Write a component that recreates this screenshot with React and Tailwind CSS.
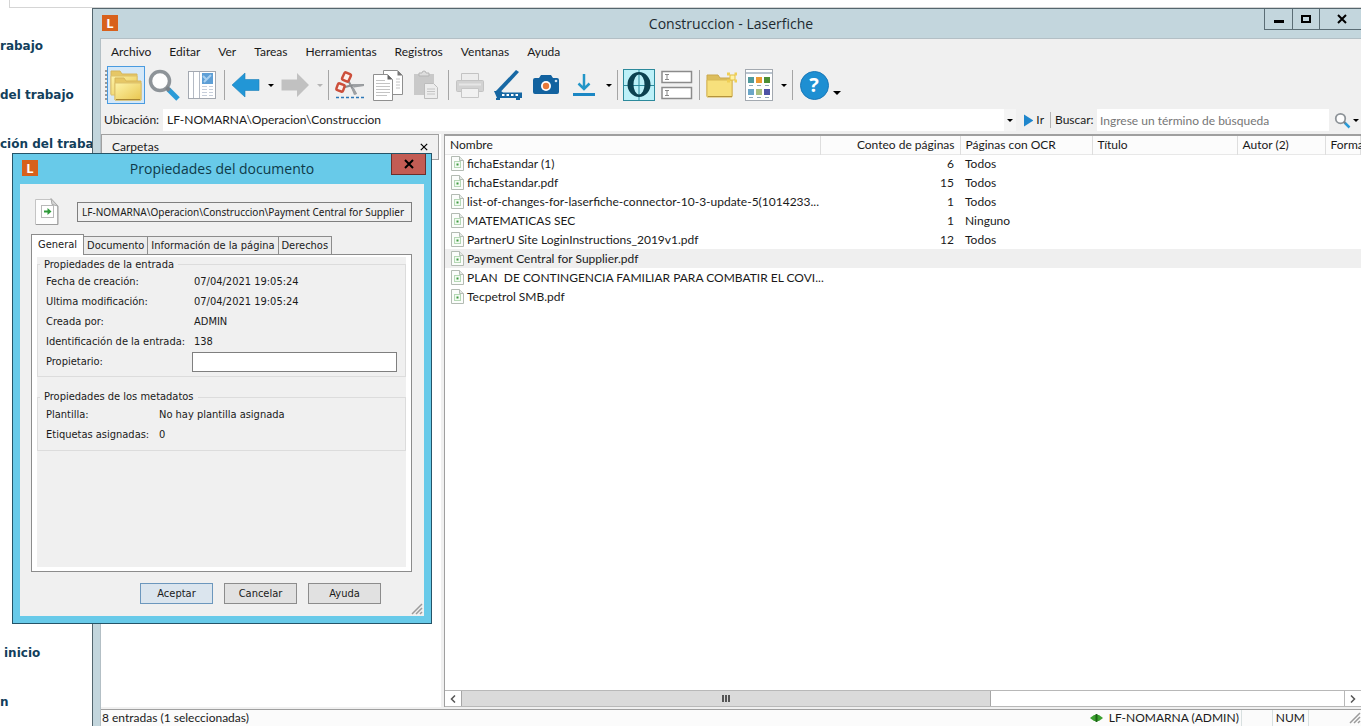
import { useState } from 'react';

const menus = ['Archivo', 'Editar', 'Ver', 'Tareas', 'Herramientas', 'Registros', 'Ventanas', 'Ayuda'];

const entries = [
  { name: 'fichaEstandar (1)', pages: 6, ocr: 'Todos' },
  { name: 'fichaEstandar.pdf', pages: 15, ocr: 'Todos' },
  { name: 'list-of-changes-for-laserfiche-connector-10-3-update-5(1014233...', pages: 1, ocr: 'Todos' },
  { name: 'MATEMATICAS SEC', pages: 1, ocr: 'Ninguno' },
  { name: 'PartnerU Site LoginInstructions_2019v1.pdf', pages: 12, ocr: 'Todos' },
  { name: 'Payment Central for Supplier.pdf', pages: '', ocr: '' },
  { name: 'PLAN  DE CONTINGENCIA FAMILIAR PARA COMBATIR EL COVI...', pages: '', ocr: '' },
  { name: 'Tecpetrol SMB.pdf', pages: '', ocr: '' },
];

const tabs = ['General', 'Documento', 'Información de la página', 'Derechos'];

/* ---------- icons ---------- */

const FoldersIcon = () => (
  <svg width="34" height="34" viewBox="0 0 34 34">
    <defs>
      <linearGradient id="folder" x1="0" y1="0" x2="1" y2="1">
        <stop offset="0" stopColor="#fdf3a8" />
        <stop offset="1" stopColor="#e9c64f" />
      </linearGradient>
    </defs>
    <path d="M2 3h9l2 3h15v20H2z" fill="#e6c765" stroke="#d6b65c" />
    <path d="M2 8h26v19H2z" fill="url(#folder)" stroke="#dcc06c" />
    <path d="M6 10h9l2 3h15v19H6z" fill="#e6c765" stroke="#d6b65c" />
    <path d="M6 15h26v17H6z" fill="url(#folder)" stroke="#dcc06c" />
    <path d="M7 31.500h24" stroke="#a98632" />
  </svg>
);

const SearchIcon = ({ size = 34 }) => (
  <svg width={size} height={size} viewBox="0 0 34 34">
    <circle cx="13" cy="13" r="9.500" fill="#fdfdfd" stroke="#8d9398" strokeWidth="3.500" />
    <path d="M21 21l10 10" stroke="#2a9bd8" strokeWidth="5" />
    <path d="M19.500 19.500l3 3" stroke="#7b8288" strokeWidth="4" />
  </svg>
);

const PanesIcon = () => (
  <svg width="30" height="30" viewBox="0 0 30 30">
    <rect x="1.500" y="1.500" width="27" height="27" fill="#fff" stroke="#a3a8b0" />
    <path d="M6.500 2v26M12.500 2v26" stroke="#b4bac4" />
    <rect x="15" y="3" width="11" height="11" fill="#5e9fd6" />
    <path d="M17 12l7-7M16 6l4 4" stroke="#a9d0ef" strokeWidth="2" />
    <path d="M15 16.500h5M15 19.500h5M15 22.500h5M15 25.500h5M22 16.500h4M22 19.500h4M22 22.500h4M22 25.500h4" stroke="#c6cedb" />
  </svg>
);

const ArrowIcon = ({ forward }) => (
  <svg width="30" height="26" viewBox="0 0 30 26">
    {forward ? (
      <path d="M29 13L17 1v6.500H1.500v11H17V25z" fill="#c1c1c1" />
    ) : (
      <path d="M1 13L14 1v6.500h14v11H14V25z" fill="#2296d6" stroke="#1b7fb8" strokeWidth=".6" />
    )}
  </svg>
);

const CutIcon = () => (
  <svg width="32" height="30" viewBox="0 0 32 30">
    <path d="M14.500 11L17 16L22 24M9 17.500l8-2 13-.5" fill="none" stroke="#8a8d90" strokeWidth="2" />
    <path d="M16 14l14 .5v1.500l-13 2zM16 15l4 10 3-1-5-10z" fill="#9da0a3" />
    <rect x="9" y="3" width="7" height="8" rx="1.500" fill="#fdf0ec" stroke="#cc4f3b" strokeWidth="2.500" transform="rotate(25 12.500 7)" />
    <rect x="3" y="14" width="7" height="7" rx="1.500" fill="#fdf0ec" stroke="#cc4f3b" strokeWidth="2.500" transform="rotate(20 6.500 17.500)" />
    <path d="M2 27.500h28" stroke="#2c78b8" strokeWidth="1.500" strokeDasharray="3 2" />
  </svg>
);

const CopyIcon = () => (
  <svg width="32" height="32" viewBox="0 0 32 32">
    <path d="M11.500 1.500h14l5 5v19h-19z" fill="#fff" stroke="#8f8f8f" />
    <path d="M25.500 1.500v5h5z" fill="#777" />
    <path d="M24 10h4M24 13h4M24 16h4M24 19h4" stroke="#c4c4c4" />
    <path d="M1.500 5.500h14l5 5v21h-19z" fill="#fff" stroke="#8f8f8f" />
    <path d="M15.500 5.500v5h5z" fill="#666" />
    <path d="M4 11.500h9M4 14.500h14M4 17.500h14M4 20.500h14M4 23.500h14M4 26.500h11" stroke="#c4c4c4" />
  </svg>
);

const PasteIcon = () => (
  <svg width="28" height="30" viewBox="0 0 28 30">
    <path d="M2 4h20v21H2z" fill="#c9c9c9" />
    <path d="M7 6V3h3a2 2 0 014 0h3v3z" fill="#dedede" stroke="#b5b5b5" />
    <path d="M12.500 13.500h9l4 4v11h-13z" fill="#ededed" stroke="#bdbdbd" />
    <path d="M15 19h8M15 21.500h8M15 24h8" stroke="#c4c4c4" />
  </svg>
);

const PrintIcon = () => (
  <svg width="30" height="28" viewBox="0 0 30 28">
    <path d="M6.500 2.500h17v8h-17z" fill="#ededed" stroke="#c3c3c3" />
    <rect x="1.500" y="9.500" width="27" height="11" rx="1" fill="#d2d2d2" stroke="#c3c3c3" />
    <path d="M4 13.500h22" stroke="#e6e6e6" strokeWidth="2" />
    <path d="M6.500 17.500h17v9h-17z" fill="#f1f1f1" stroke="#c6c6c6" />
  </svg>
);

const ScanIcon = () => (
  <svg width="32" height="32" viewBox="0 0 32 32">
    <path d="M24 1l3 2L8.500 23H3z" fill="#1768a4" />
    <path d="M2 22h7l2 1.500h19v5.500H5z" fill="#1566a2" />
    <path d="M10 26h2.500M14.500 26H17M19 26h2.500M23.500 26H26" stroke="#fff" strokeWidth="2" />
    <path d="M4 30h4M24 30h4" stroke="#1566a2" strokeWidth="2" />
  </svg>
);

const CameraIcon = () => (
  <svg width="28" height="24" viewBox="0 0 28 24">
    <path d="M9 2h10l2 3h4a2 2 0 012 2v12a2 2 0 01-2 2H3a2 2 0 01-2-2V7a2 2 0 012-2h4z" fill="#12629f" />
    <circle cx="14" cy="13" r="5" fill="#fff" />
    <circle cx="14" cy="13" r="3.200" fill="#e8793a" />
    <circle cx="24" cy="8" r="1.300" fill="#cfe3f2" />
  </svg>
);

const DownloadIcon = () => (
  <svg width="24" height="24" viewBox="0 0 24 24">
    <path d="M12 1v14M6.500 10.500L12 16l5.500-5.500" fill="none" stroke="#2296c8" strokeWidth="2.500" />
    <path d="M1 21.500h22" stroke="#1b87c4" strokeWidth="3" />
  </svg>
);

const OcrIcon = () => (
  <svg width="32" height="32" viewBox="0 0 32 32">
    <rect x=".5" y=".5" width="31" height="31" fill="#bcf0f8" stroke="#2d8a9c" />
    <path d="M1 16.500h30M16 1v30" stroke="#2d8a9c" />
    <path
      d="M16 3a11.500 12.500 0 100 25a11.500 12.500 0 100-25zM16 5.500a5.500 10 0 110 20a5.500 10 0 110-20z"
      fill="#0c4150"
      fillRule="evenodd"
    />
  </svg>
);

const FieldsIcon = () => (
  <svg width="32" height="30" viewBox="0 0 32 30">
    <rect x="1" y="1.500" width="29.500" height="11" fill="#fff" stroke="#8b8b8b" strokeWidth="1.500" />
    <rect x="1" y="17.500" width="29.500" height="11" fill="#fff" stroke="#8b8b8b" strokeWidth="1.500" />
    <path d="M4 4.500h4M6 4.500v5M4 9.500h4M4 20.500h4M6 20.500v5M4 25.500h4" stroke="#888" />
  </svg>
);

const NewFolderIcon = () => (
  <svg width="32" height="28" viewBox="0 0 32 28">
    <path d="M2 4h11l2 3h12v18H2z" fill="#dcbd5c" stroke="#cba94c" />
    <path d="M2 9h25v17H2z" fill="#f7e07c" stroke="#d8b854" />
    <path d="M3 25.500h24" stroke="#b4933c" />
    <path d="M25 4h5v5h-5z" fill="#fff3a6" stroke="#e3bf45" />
    <path d="M22 1.500h3v3h-3zM29.500 1.500h2.500v3h-2.500zM22 8.500h3v3h-3zM29.500 8.500h2.500v3h-2.500z" fill="#f0cf55" />
  </svg>
);

const TilesIcon = () => (
  <svg width="30" height="32" viewBox="0 0 30 32">
    <rect x="1.500" y=".5" width="27" height="31" fill="#fff" stroke="#a3a9b0" />
    <path d="M2 4h26" stroke="#b8c3ce" strokeWidth="2" />
    <rect x="4" y="8" width="6" height="6" fill="#4f9a9c" />
    <rect x="12" y="8" width="6" height="6" fill="#ec9a34" />
    <rect x="20" y="8" width="6" height="6" fill="#4d8f35" />
    <rect x="4" y="20" width="6" height="6" fill="#6ba6c8" />
    <rect x="12" y="20" width="6" height="6" fill="#a9c07e" />
    <rect x="20" y="20" width="6" height="6" fill="#4e53a6" />
    <path d="M5 16.500h4M13 16.500h4M21 16.500h4M5 28.500h4M13 28.500h4M21 28.500h4" stroke="#8fa6b8" />
  </svg>
);

const HelpIcon = () => (
  <span className="flex h-[29px] w-[29px] items-center justify-center rounded-full border border-[#1a78b8] bg-[#1e8fd2] font-['Open_Sans'] text-xl font-bold text-white">
    ?
  </span>
);

const CloseGlyph = ({ size = 10, width = 2 }) => (
  <svg width={size} height={size} viewBox="0 0 10 10">
    <path d="M1 1l8 8M9 1L1 9" stroke="#000" strokeWidth={width} />
  </svg>
);

const DocIcon = () => (
  <svg width="13" height="16" viewBox="0 0 13 16" className="shrink-0">
    <path d="M.5.5h8l4 4v10H.5z" fill="#fbfdfb" stroke="#b3bbb3" />
    <path d="M8.500.5v4h4" fill="#e3e8e3" stroke="#b3bbb3" />
    <rect x="3.500" y="5.500" width="6" height="6" fill="#f2fbf2" stroke="#b5d8b5" />
    <rect x="5.500" y="7.500" width="2" height="2" fill="#3f9a3f" />
  </svg>
);

const BigDocIcon = () => (
  <svg width="24" height="28" viewBox="0 0 24 28">
    <path d="M.5 1.500h16l6 6v19H.5z" fill="#fdfdfd" stroke="#c4c4c4" />
    <path d="M1 26.500h22V8" fill="none" stroke="#9d9d9d" />
    <path d="M16 .5l1 6 6 1.500z" fill="#d5d5d5" stroke="#a8a8a8" />
    <rect x="6.500" y="7.500" width="12" height="12" fill="#fff" stroke="#b8b8b8" />
    <path d="M9 13.500h5" stroke="#2f9a3a" strokeWidth="2" />
    <path d="M12.500 10l4 3.500-4 3.500z" fill="#2f9a3a" />
  </svg>
);

const ConnectedIcon = () => (
  <svg width="13" height="10" viewBox="0 0 13 10">
    <path d="M0 5l4-3h5l4 3-4 3H4z" fill="#3aa02f" />
    <path d="M6.500 1v8" stroke="#1c6417" strokeWidth="2" />
  </svg>
);

const GripIcon = () => (
  <svg width="12" height="12" viewBox="0 0 12 12">
    <path d="M1 11L11 1M5 11l6-6M9 11l2-2" stroke="#9b9b9b" strokeWidth="1.500" />
  </svg>
);

/* ---------- small parts ---------- */

const Logo = () => (
  <span className="flex h-4 w-4 items-center justify-center bg-[#d8611c] text-[13px] leading-4 font-bold text-white">L</span>
);

const Arrow = ({ color = 'border-t-black' }) => (
  <span className={`h-0 w-0 border-x-[3px] border-t-[3px] border-x-transparent ${color}`} />
);

const Tool = ({ label, active, children }) => (
  <button
    type="button"
    aria-label={label}
    className={`flex h-[38px] w-[38px] items-center justify-center border ${
      active ? 'border-[#4a9be0] bg-[#d5e8f8]' : 'border-transparent'
    }`}
  >
    {children}
  </button>
);

const ToolMenu = ({ label, color }) => (
  <button type="button" aria-label={label} className="flex h-[38px] w-[11px] items-center justify-center">
    <Arrow color={color} />
  </button>
);

const Separator = () => (
  <span className="flex w-1.5 justify-center">
    <span className="h-[30px] w-px bg-[#a5a5a5]" />
  </span>
);

const Field = ({ label, children, labelWidth }) => (
  <div className="flex h-5 items-center">
    <dt className={labelWidth}>{label}</dt>
    <dd>{children}</dd>
  </div>
);

/* ---------- page behind the windows ---------- */

function PageBehind() {
  return (
    <div className="flex h-full flex-col">
      <div className="ml-[9px] h-2 border-b border-l border-[#d5d5d5]" />
      <ul className="flex w-[92px] flex-1 flex-col pt-[13px] font-['DejaVu_Sans'] text-xs font-bold whitespace-nowrap text-[#123f5c]">
        <li className="flex h-[49px] items-center">rabajo</li>
        <li className="flex h-[49px] items-center">del trabajo</li>
        <li className="flex h-[49px] items-center">ción del traba</li>
        <li className="mt-auto flex h-[49px] items-center pl-1">inicio</li>
        <li className="flex h-[49px] items-center">n</li>
      </ul>
    </div>
  );
}

/* ---------- main window ---------- */

function Toolbar() {
  return (
    <div role="toolbar" className="flex h-[42px] items-center pl-1">
      <span className="h-[30px] border-l-2 border-dotted border-[#9a9a9a]" />
      <Tool label="Carpetas" active><FoldersIcon /></Tool>
      <Tool label="Buscar"><SearchIcon /></Tool>
      <Tool label="Paneles"><PanesIcon /></Tool>
      <Separator />
      <Tool label="Atrás"><ArrowIcon /></Tool>
      <ToolMenu label="Historial atrás" />
      <Tool label="Adelante"><ArrowIcon forward /></Tool>
      <ToolMenu label="Historial adelante" color="border-t-[#b5b5b5]" />
      <Separator />
      <Tool label="Cortar"><CutIcon /></Tool>
      <Tool label="Copiar"><CopyIcon /></Tool>
      <Tool label="Pegar"><PasteIcon /></Tool>
      <Separator />
      <Tool label="Imprimir"><PrintIcon /></Tool>
      <Tool label="Escanear"><ScanIcon /></Tool>
      <Tool label="Capturar"><CameraIcon /></Tool>
      <Tool label="Importar"><DownloadIcon /></Tool>
      <ToolMenu label="Opciones de importación" />
      <Separator />
      <Tool label="OCR"><OcrIcon /></Tool>
      <Tool label="Campos"><FieldsIcon /></Tool>
      <Separator />
      <Tool label="Nueva carpeta"><NewFolderIcon /></Tool>
      <Tool label="Vista"><TilesIcon /></Tool>
      <ToolMenu label="Opciones de vista" />
      <Separator />
      <Tool label="Ayuda"><HelpIcon /></Tool>
      <button type="button" aria-label="Opciones de la barra" className="flex pt-4">
        <span className="h-0 w-0 border-x-4 border-t-4 border-x-transparent border-t-black" />
      </button>
    </div>
  );
}

function AddressBar() {
  const [location, setLocation] = useState('LF-NOMARNA\\Operacion\\Construccion');
  const [query, setQuery] = useState('');

  return (
    <div className="flex h-7 items-center pl-[3px]">
      <label htmlFor="location" className="w-[59px]">Ubicación:</label>
      <div className="flex h-[22px] flex-1 bg-white">
        <input
          id="location"
          value={location}
          onChange={(e) => setLocation(e.target.value)}
          className="min-w-0 flex-1 px-1 outline-none"
        />
        <button type="button" aria-label="Ubicaciones recientes" className="flex w-3 items-center justify-center bg-[#f5f5f5]">
          <Arrow />
        </button>
      </div>
      <button type="button" className="mr-1.5 ml-2 flex w-5 items-center gap-[3px]">
        <svg width="10" height="13" viewBox="0 0 10 13"><path d="M0 0l10 6.500L0 13z" fill="#1f86cc" /></svg>
        Ir
      </button>
      <span className="mr-1 h-4 w-px bg-[#b5b5b5]" />
      <label htmlFor="search" className="w-[42px]">Buscar:</label>
      <input
        id="search"
        value={query}
        onChange={(e) => setQuery(e.target.value)}
        placeholder="Ingrese un término de búsqueda"
        className="h-[22px] w-[232px] bg-white px-[3px] outline-none placeholder:text-[#767676]"
      />
      <button type="button" aria-label="Buscar" className="ml-1 flex w-[18px] justify-center"><SearchIcon size={17} /></button>
      <button type="button" aria-label="Opciones de búsqueda" className="flex w-2.5 justify-center"><Arrow /></button>
    </div>
  );
}

function EntryList() {
  const [selected, setSelected] = useState(5);

  return (
    <section className="flex min-w-0 flex-1 flex-col border-t-2 border-l border-[#9f9f9f] bg-white">
      <div className="flex-1 overflow-hidden">
        <table className="w-full table-fixed">
          <colgroup>
            <col className="w-[375px]" />
            <col className="w-[140px]" />
            <col className="w-[132px]" />
            <col className="w-[145px]" />
            <col className="w-[88px]" />
            <col />
          </colgroup>
          <thead>
            <tr className="h-[18px] border-b border-[#e8e8e8] bg-[#fcfcfc] text-left whitespace-nowrap [&>th]:border-r [&>th]:border-[#dedede] [&>th]:px-[5px] [&>th]:font-normal">
              <th>Nombre</th>
              <th className="text-right">Conteo de páginas</th>
              <th>Páginas con OCR</th>
              <th>Título</th>
              <th>Autor (2)</th>
              <th>Forma</th>
            </tr>
          </thead>
          <tbody>
            {entries.map((entry, i) => (
              <tr
                key={entry.name}
                onClick={() => setSelected(i)}
                className={`h-[19px] ${i === selected ? 'bg-[#efefef]' : ''}`}
              >
                <td className="pl-1.5">
                  <span className="flex items-center gap-[3px] whitespace-pre">
                    <DocIcon />
                    {entry.name}
                  </span>
                </td>
                <td className="pr-1.5 text-right">{entry.pages}</td>
                <td className="pl-[5px]">{entry.ocr}</td>
                <td />
                <td />
                <td />
              </tr>
            ))}
          </tbody>
        </table>
      </div>
      <div className="flex h-[17px] border-y border-[#b8b8b8]">
        <button type="button" aria-label="Desplazar a la izquierda" className="flex w-4 items-center justify-center">
          <svg width="6" height="8" viewBox="0 0 6 8"><path d="M5 .5L1.500 4 5 7.500" fill="none" stroke="#555" strokeWidth="1.500" /></svg>
        </button>
        <div className="flex flex-1 border-r border-[#b8b8b8]">
          <div className="flex w-3/5 items-center justify-center gap-px border-x border-[#a6a6a6] bg-[#dadada]">
            <span className="h-[7px] w-0.5 bg-[#555]" />
            <span className="h-[7px] w-0.5 bg-[#555]" />
            <span className="h-[7px] w-0.5 bg-[#555]" />
          </div>
        </div>
        <button type="button" aria-label="Desplazar a la derecha" className="flex w-4 items-center justify-center">
          <svg width="6" height="8" viewBox="0 0 6 8"><path d="M1 .5L4.500 4 1 7.500" fill="none" stroke="#555" strokeWidth="1.500" /></svg>
        </button>
      </div>
    </section>
  );
}

function MainWindow() {
  return (
    <main className="absolute top-2 -right-2 bottom-0 left-[92px] flex flex-col border-t border-l border-[#54666e] bg-[#c3d6dd]">
      <header className="relative flex h-[29px] items-start justify-between pr-1 font-['Open_Sans']">
        <span className="mt-1.5 ml-[9px]"><Logo /></span>
        <h1 className="absolute inset-x-0 text-center text-sm leading-[30px] text-[#1d2a30]">Construccion - Laserfiche</h1>
        <div className="relative flex h-[21px] border-x border-b border-[#5b6d75] text-black">
          <button type="button" aria-label="Minimizar" className="flex w-[27px] items-center justify-center">
            <span className="mt-1 h-[3px] w-2.5 bg-black" />
          </button>
          <button type="button" aria-label="Maximizar" className="flex w-[27px] items-center justify-center border-l border-[#5b6d75]">
            <span className="h-2 w-2.5 border-2 border-black" />
          </button>
          <button type="button" aria-label="Cerrar" className="flex w-[45px] items-center justify-center border-l border-[#5b6d75]">
            <CloseGlyph />
          </button>
        </div>
      </header>

      <div className="mr-2 ml-[7px] flex min-h-0 flex-1 flex-col border-t border-l border-[#b3bfc5] bg-[#f0f0f0]">
        <nav className="flex h-[25px] items-center gap-[18px] pl-2.5">
          {menus.map((item) => (
            <button key={item} type="button">{item}</button>
          ))}
        </nav>
        <Toolbar />
        <AddressBar />

        <div className="flex min-h-0 flex-1 gap-[3px] pb-0.5">
          <aside className="w-[340px] bg-white">
            <div className="mr-0.5 flex h-[26px] items-center justify-between border border-[#a0a0a0] bg-[#f0f0f0] px-2.5">
              <h2>Carpetas</h2>
              <button type="button" aria-label="Cerrar carpetas"><CloseGlyph size={8} width={1.5} /></button>
            </div>
          </aside>
          <EntryList />
        </div>

        <footer className="flex h-[17px] items-center border-t border-[#a0a0a0] bg-[#fbfbfb] pl-px">
          <span className="flex-1">8 entradas (1 seleccionadas)</span>
          <span className="flex items-center gap-1.5 border-r border-[#d8e0e0] pr-0.5">
            <ConnectedIcon />
            LF-NOMARNA (ADMIN)
          </span>
          <span className="w-[30px]" />
          <span className="border-x border-[#d8e0e0] px-[3px]">NUM</span>
          <span className="w-[34px] border-r border-[#d8e0e0]" />
          <span className="flex w-[18px] justify-end"><GripIcon /></span>
        </footer>
      </div>
    </main>
  );
}

/* ---------- properties dialog ---------- */

function PropertiesDialog() {
  const [tab, setTab] = useState('General');
  const [owner, setOwner] = useState('');

  return (
    <div
      role="dialog"
      aria-labelledby="dialog-title"
      className="absolute top-[153px] left-3 flex h-[471px] w-[420px] flex-col border border-[#245468] bg-[#68cae9] px-[7px] pb-[7px] text-[11px]"
    >
      <header className="relative flex h-[30px] items-start justify-between font-['Open_Sans']">
        <span className="mt-1.5 ml-0.5"><Logo /></span>
        <h2 id="dialog-title" className="absolute inset-x-0 text-center text-sm leading-[30px] text-[#0f3a4a]">
          Propiedades del documento
        </h2>
        <button type="button" aria-label="Cerrar" className="relative -mr-0.5 flex h-[21px] w-[35px] items-center justify-center border border-t-0 border-[#6b2f2c] bg-[#c35c54]">
          <CloseGlyph />
        </button>
      </header>

      <div className="flex flex-1 flex-col bg-[#f0f0f0] pr-3 pb-3 pl-[11px] font-['DejaVu_Sans_Condensed','Open_Sans',sans-serif]">
        <div className="flex items-center gap-[18px] pt-3.5 pl-1">
          <BigDocIcon />
          <input
            aria-label="Ruta del documento"
            readOnly
            value="LF-NOMARNA\Operacion\Construccion\Payment Central for Supplier"
            className="h-5 min-w-0 flex-1 border border-[#7f7f7f] pl-1 font-['Noto_Sans'] text-[10px] outline-none"
          />
        </div>

        <div role="tablist" className="mt-[7px] flex h-[21px] items-end">
          {tabs.map((name) => (
            <button
              key={name}
              type="button"
              role="tab"
              aria-selected={tab === name}
              onClick={() => setTab(name)}
              className={`border border-b-0 border-[#8c8c8c] whitespace-nowrap ${
                tab === name ? 'relative top-px h-[21px] bg-white px-1.5' : 'h-[18px] border-l-0 bg-[#ececec] px-[3px] pt-0.5'
              }`}
            >
              {name}
            </button>
          ))}
        </div>

        <div role="tabpanel" className="flex h-[318px] flex-col border border-[#8c8c8c] bg-white px-[5px] pt-0.5 pb-1">
          <div className="flex-1 bg-[#f0f0f0]">
            {tab === 'General' && (
              <>
                <fieldset className="h-[120px] border border-[#dcdcdc] pl-2">
                  <legend className="-ml-1.5 px-1 leading-[15px]">Propiedades de la entrada</legend>
                  <dl>
                    <Field label="Fecha de creación:" labelWidth="w-[148px]">07/04/2021 19:05:24</Field>
                    <Field label="Ultima modificación:" labelWidth="w-[148px]">07/04/2021 19:05:24</Field>
                    <Field label="Creada por:" labelWidth="w-[148px]">ADMIN</Field>
                    <Field label="Identificación de la entrada:" labelWidth="w-[148px]">138</Field>
                  </dl>
                  <div className="flex h-5 items-center">
                    <label htmlFor="owner" className="w-[146px]">Propietario:</label>
                    <input
                      id="owner"
                      value={owner}
                      onChange={(e) => setOwner(e.target.value)}
                      className="mr-2 h-5 min-w-0 flex-1 border border-[#7f7f7f] bg-white px-1 outline-none"
                    />
                  </div>
                </fieldset>
                <fieldset className="mt-3 h-[62px] border border-[#dcdcdc] pl-2">
                  <legend className="-ml-1.5 px-1 leading-4">Propiedades de los metadatos</legend>
                  <dl>
                    <Field label="Plantilla:" labelWidth="w-[113px]">No hay plantilla asignada</Field>
                    <Field label="Etiquetas asignadas:" labelWidth="w-[113px]">0</Field>
                  </dl>
                </fieldset>
              </>
            )}
          </div>
        </div>

        <div className="mt-[11px] mr-[31px] flex justify-end gap-[11px]">
          <button type="button" className="h-[21px] w-[73px] border border-[#6c97bd] bg-[#dbe5ee] pt-0.5">Aceptar</button>
          <button type="button" className="h-[21px] w-[73px] border border-[#8c8c8c] bg-[#e1e1e1] pt-0.5">Cancelar</button>
          <button type="button" className="h-[21px] w-[73px] border border-[#8c8c8c] bg-[#e1e1e1] pt-0.5">Ayuda</button>
        </div>
      </div>
      <span className="absolute right-2 bottom-2"><GripIcon /></span>
    </div>
  );
}

export default function App() {
  return (
    <div className="relative h-screen overflow-hidden bg-white font-['Lato','Open_Sans',sans-serif] text-xs text-[#1a1a1a]">
      <PageBehind />
      <MainWindow />
      <PropertiesDialog />
    </div>
  );
}
